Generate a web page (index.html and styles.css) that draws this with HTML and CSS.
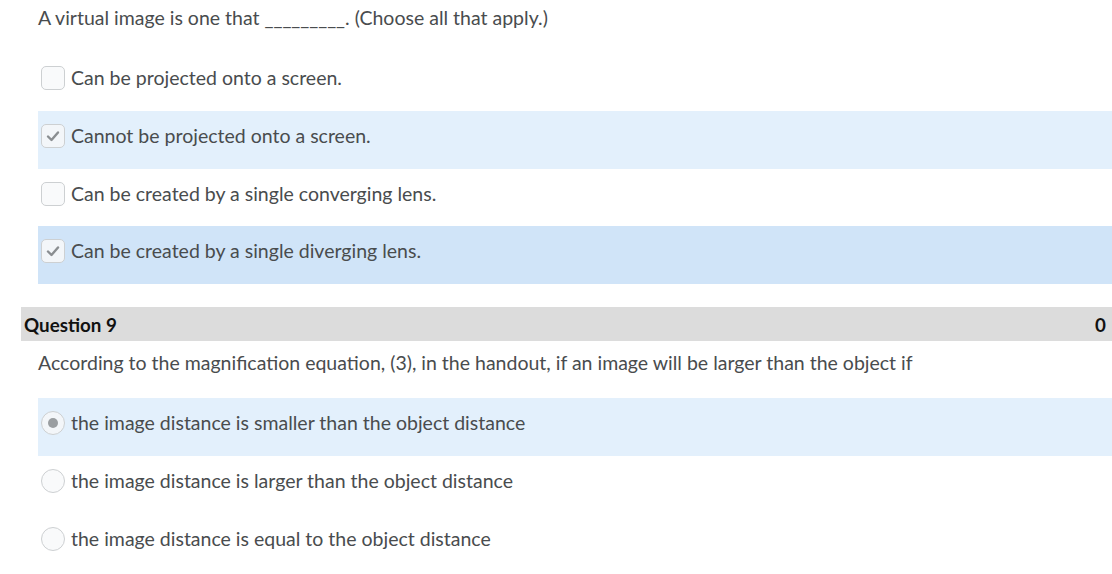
FILE: index.html
```html
<!DOCTYPE html>
<html lang="en">
<head>
    <meta charset="UTF-8">
    <title>Quiz</title>
    <link rel="stylesheet" href="styles.css">
</head>
<body>
    <div class="quiz">
        <div class="question">
            <p class="question-text">A virtual image is one that _________. (Choose all that apply.)</p>
            <ul class="options">
                <li class="option">
                    <span class="check"></span>
                    <span>Can be projected onto a screen.</span>
                </li>
                <li class="option selected">
                    <span class="check checked">
                        <svg width="16" height="16" viewBox="0 0 16 16"><path d="M3 8.5 L6.5 12 L13 4.5" fill="none" stroke="#8a8e91" stroke-width="2.4" stroke-linecap="round" stroke-linejoin="round"/></svg>
                    </span>
                    <span>Cannot be projected onto a screen.</span>
                </li>
                <li class="option">
                    <span class="check"></span>
                    <span>Can be created by a single converging lens.</span>
                </li>
                <li class="option selected hover">
                    <span class="check checked">
                        <svg width="16" height="16" viewBox="0 0 16 16"><path d="M3 8.5 L6.5 12 L13 4.5" fill="none" stroke="#8a8e91" stroke-width="2.4" stroke-linecap="round" stroke-linejoin="round"/></svg>
                    </span>
                    <span>Can be created by a single diverging lens.</span>
                </li>
            </ul>
        </div>

        <div class="question-header">
            <span>Question 9</span>
            <span class="score">0</span>
        </div>

        <div class="question">
            <p class="question-text">According to the magnification equation, (3), in the handout, if an image will be larger than the object if</p>
            <ul class="options radios">
                <li class="option selected">
                    <span class="radio checked"><span class="dot"></span></span>
                    <span>the image distance is smaller than the object distance</span>
                </li>
                <li class="option">
                    <span class="radio"></span>
                    <span>the image distance is larger than the object distance</span>
                </li>
                <li class="option">
                    <span class="radio"></span>
                    <span>the image distance is equal to the object distance</span>
                </li>
            </ul>
        </div>
    </div>
</body>
</html>
```

FILE: styles.css
```css
* {
    margin: 0;
    padding: 0;
    box-sizing: border-box;
}

body {
    background: #fff;
    font-family: Lato, 'Liberation Sans', sans-serif;
    color: #494c4e;
    font-size: 19.5px;
}

.quiz {
    padding-left: 21px;
}

.question {
    padding-left: 17px;
}

.question-text {
    line-height: 24px;
    padding-top: 6px;
    height: 53px;
}

.options {
    list-style: none;
}

.option {
    display: flex;
    align-items: flex-start;
    gap: 6px;
    height: 57.75px;
    padding: 13px 0 0 3px;
    line-height: 24px;
}

.option.selected {
    background: #e3f0fc;
}

.option.hover {
    background: #d0e4f8;
}

.check {
    width: 24px;
    height: 24px;
    border: 1px solid #cdd0d2;
    border-radius: 5px;
    background: #f9fafb;
    display: flex;
    align-items: center;
    justify-content: center;
    flex-shrink: 0;
}

.check.checked {
    background: #f3f6f9;
}

.radio {
    width: 24px;
    height: 24px;
    border: 1px solid #cdd0d2;
    border-radius: 50%;
    background: #f9fafb;
    display: flex;
    align-items: center;
    justify-content: center;
    flex-shrink: 0;
}

.radio.checked {
    background: #f3f6f9;
}

.radio .dot {
    width: 10px;
    height: 10px;
    border-radius: 50%;
    background: #9a9ea1;
}

.question-header {
    margin-top: 23px;
    background: #dcdcdc;
    height: 34px;
    display: flex;
    justify-content: space-between;
    align-items: center;
    padding: 0 6px 0 3px;
    font-weight: bold;
    font-size: 18.8px;
    color: #111;
}

.radios .option {
    padding-top: 13px;
}

.question-header + .question .question-text {
    padding-top: 10px;
    height: 57px;
}
```
